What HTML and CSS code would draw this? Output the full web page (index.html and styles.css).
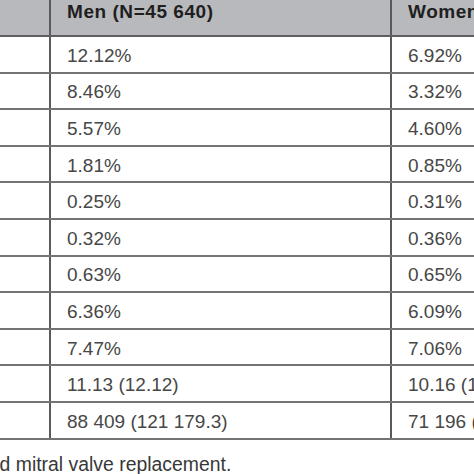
FILE: index.html
```html
<!DOCTYPE html>
<html lang="en">
<head>
    <meta charset="UTF-8">
    <meta name="viewport" content="width=device-width, initial-scale=1.0">
    <title>Table 1 - Men and women</title>
    <link rel="stylesheet" href="styles.css">
</head>
<body>
    <div class="sheet">
        <div class="row head">
            <div class="cell label"></div>
            <div class="cell">Men (N=45 640)</div>
            <div class="cell">Women (N=38 215)</div>
        </div>
        <div class="row"><div class="cell label"></div><div class="cell">12.12%</div><div class="cell">6.92%</div></div>
        <div class="row"><div class="cell label"></div><div class="cell">8.46%</div><div class="cell">3.32%</div></div>
        <div class="row"><div class="cell label"></div><div class="cell">5.57%</div><div class="cell">4.60%</div></div>
        <div class="row"><div class="cell label"></div><div class="cell">1.81%</div><div class="cell">0.85%</div></div>
        <div class="row"><div class="cell label"></div><div class="cell">0.25%</div><div class="cell">0.31%</div></div>
        <div class="row"><div class="cell label"></div><div class="cell">0.32%</div><div class="cell">0.36%</div></div>
        <div class="row"><div class="cell label"></div><div class="cell">0.63%</div><div class="cell">0.65%</div></div>
        <div class="row"><div class="cell label"></div><div class="cell">6.36%</div><div class="cell">6.09%</div></div>
        <div class="row"><div class="cell label"></div><div class="cell">7.47%</div><div class="cell">7.06%</div></div>
        <div class="row"><div class="cell label"></div><div class="cell">11.13 (12.12)</div><div class="cell">10.16 (11.08)</div></div>
        <div class="row"><div class="cell label"></div><div class="cell">88 409 (121 179.3)</div><div class="cell">71 196 (104 512.7)</div></div>
    </div>
    <p class="note">and mitral valve replacement.</p>
</body>
</html>
```

FILE: styles.css
```css
/* --- Page --- */
html, body {
    margin: 0;
    overflow: hidden;
    background: #fff;
}

body {
    font-family: 'Liberation Sans', Arial, sans-serif;
    font-size: 19px;
    line-height: 24px;
    color: #474747;
}

/* --- Table (left column runs off the crop) --- */
.sheet {
    margin-left: -200px;
    width: 820px;
}

.row {
    display: grid;
    grid-template-columns: 249px 341px 1fr;
    height: 36.6px;
    box-sizing: border-box;
    border-bottom: 2px solid #747474;
}

.cell {
    display: flex;
    align-items: center;
    padding: 3px 0 0 16px;
    border-left: 2px solid #5a5a5a;
    white-space: nowrap;
}

.cell.label {
    border-left: none;
}

.row.head {
    height: 37px;
    background-color: #b8b9bc;
    border-bottom-color: #5e5e5e;
}

.row.head .cell {
    align-items: flex-start;
    padding-top: 0;
    color: #1f1f1f;
    font-weight: bold;
    letter-spacing: 0.55px;
}

/* --- Footnote --- */
.note {
    margin: 12px 0 0 -22px;
    font-size: 19.4px;
    color: #383838;
    white-space: nowrap;
}
```
